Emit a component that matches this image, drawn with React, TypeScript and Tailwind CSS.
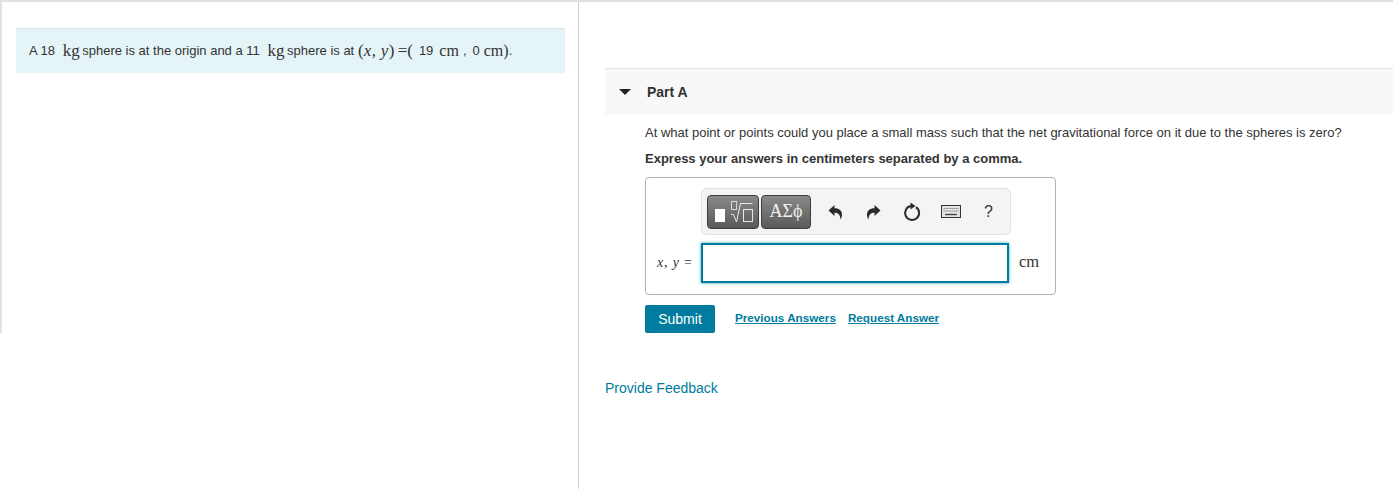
import React from "react";

const sans = "font-['Liberation_Sans',Arial,sans-serif]";
const math = "font-['Liberation_Serif','DejaVu_Serif',serif]";

// Matrix / radical template glyph of the first toolbar button
const TemplatesIcon = () => (
  <svg width="50" height="32" viewBox="0 0 50 32" fill="none">
    <rect x="7" y="13" width="10" height="13" fill="#fff" />
    <rect x="23.5" y="5.5" width="5" height="8" stroke="#d8d8d8" strokeWidth="1" />
    <path d="M23 18.5h2.5l3 7.5 4-18.5h12" stroke="#e8e8e8" strokeWidth="1" />
    <rect x="35.5" y="13.5" width="9" height="12" stroke="#e8e8e8" strokeWidth="1" />
  </svg>
);

const UndoIcon = ({ flip }: { flip?: boolean }) => (
  <svg width="15" height="16" viewBox="0 0 15 16" className={flip ? "-scale-x-100" : ""}>
    <path d="M6.5 1 0.5 6.5 6.5 12V8.7C10 8.7 12 10 12.6 15.5 15.8 9.5 13.5 4.2 6.5 4.2Z" fill="#2b2b2b" />
  </svg>
);

const ResetIcon = () => (
  <svg width="18" height="20" viewBox="0 0 18 20" fill="none">
    <path d="M13 5.2a7 7 0 1 1-5-1.1" stroke="#2b2b2b" strokeWidth="2" />
    <path d="M7.5 0.5l5 3.5-5 3.5z" fill="#2b2b2b" />
  </svg>
);

const KeyboardIcon = () => (
  <svg width="20" height="13" viewBox="0 0 20 13" fill="none">
    <rect x="0.5" y="0.5" width="19" height="12" fill="#e4e4e4" stroke="#333" />
    <path d="M2.5 3.5h15M2.5 6h15" stroke="#777" strokeWidth="1.2" strokeDasharray="1.2 .8" />
    <path d="M4 9.5h12" stroke="#444" strokeWidth="1.4" />
  </svg>
);

const ToolButton = ({ children }: { children: React.ReactNode }) => (
  <button className="flex h-[34px] items-center justify-center rounded-[4px] border border-[#3d3d3d] bg-gradient-to-b from-[#8a8a8a] to-[#5a5a5a]">
    {children}
  </button>
);

const Toolbar = () => (
  <div className="flex h-[47px] w-[310px] items-center rounded-[6px] border border-[#e0e0e0] bg-[#f4f4f4] pl-[5px]">
    <ToolButton>
      <span className="flex w-[50px] justify-center">
        <TemplatesIcon />
      </span>
    </ToolButton>
    <span className="w-[2px]" />
    <ToolButton>
      <span className={`${math} w-[48px] text-center text-[18px] text-[#f2f2f2]`}>ΑΣϕ</span>
    </ToolButton>
    <span className="ml-[17px] flex">
      <UndoIcon />
    </span>
    <span className="ml-[23px] flex">
      <UndoIcon flip />
    </span>
    <span className="ml-[22px] flex">
      <ResetIcon />
    </span>
    <span className="ml-[20px] flex">
      <KeyboardIcon />
    </span>
    <span className={`${sans} ml-[23px] text-[16px] text-[#333]`}>?</span>
  </div>
);

export default function App() {
  return (
    <div className={`${sans} flex h-[489px] w-full overflow-hidden border-t-2 border-[#e2e2e2] bg-white text-[14px] text-[#333]`}>
      {/* Left: problem statement */}
      <div className="w-[579px] shrink-0 border-r border-[#c8d4df] pl-[16px] pr-[13px] pt-[26px]">
        <div className="flex h-[45px] items-center border-t border-[#dde3e4] bg-[#e5f5f7] pl-[13px] text-[13px] whitespace-pre">
          A 18 <span className={`${math} ml-[4px] mr-[-1px] text-[17px]`}>kg</span> sphere is at the origin and a 11{" "}
          <span className={`${math} ml-[4px] mr-[-1px] text-[17px]`}>kg</span> sphere is at{" "}
          <span className={`${math} text-[17px] tracking-[0.3px]`}>
            (<i>x</i>, <i>y</i>)
          </span>
          <span className={`${math} ml-[3px] text-[17px]`}>=(</span>
          <span className="ml-[6px]">19</span>
          <span className={`${math} ml-[6px] text-[16px]`}>cm</span>
          <span className="ml-[4px]">,</span>
          <span className="ml-[6px]">0</span>
          <span className={`${math} ml-[4px] text-[16px]`}>cm)</span>.
        </div>
      </div>

      {/* Right: question */}
      <div className="min-w-0 flex-1 pl-[26px] pt-[66px]">
        <div className="flex h-[47px] items-center border-t border-[#e2e2e2] bg-[#f8f8f8] pl-[14px]">
          <span className="h-0 w-0 border-x-[6px] border-t-[6px] border-x-transparent border-t-[#222]" />
          <span className="ml-[16px] mt-[1px] text-[14px] font-bold">Part A</span>
        </div>

        <div className="pl-[40px]">
          <p className="mt-[10px] h-[16px] text-[13px] leading-[16px]">
            At what point or points could you place a small mass such that the net gravitational force on it due to the spheres is zero?
          </p>
          <p className="mt-[10px] h-[16px] text-[13px] font-bold leading-[16px]">Express your answers in centimeters separated by a comma.</p>

          <div className="mt-[10px] w-[411px] rounded-[4px] border border-[#b0b0b0] pb-[11px] pl-[55px] pt-[10px]">
            <Toolbar />
            <div className="relative mt-[8px] flex items-center">
              <span className={`${math} absolute left-[-44px] top-[9px] text-[14px] tracking-[0.8px] text-[#333]`}>
                <i>x</i>, <i>y</i> =
              </span>
              <div className="h-[40px] w-[308px] border-2 border-[#007c9e] bg-white shadow-[0_0_3px_#3aa6c4]" />
              <span className={`${math} mb-[2px] ml-[10px] text-[16.5px]`}>cm</span>
            </div>
          </div>

          <div className="mt-[10px] flex items-center">
            <button className="h-[28px] w-[70px] rounded-[2px] bg-[#007c9e] text-[14px] text-white">Submit</button>
            <a className="ml-[20px] -mt-[2px] text-[11.7px] font-bold text-[#007c9e] underline">Previous Answers</a>
            <a className="ml-[12px] -mt-[2px] text-[11.7px] font-bold text-[#007c9e] underline">Request Answer</a>
          </div>
        </div>

        <a className="mt-[45px] block text-[14px] text-[#007c9e]">Provide Feedback</a>
      </div>
      <div className="absolute left-0 top-0 h-[333px] w-[2px] bg-[#e2e2e2]" />
    </div>
  );
}
